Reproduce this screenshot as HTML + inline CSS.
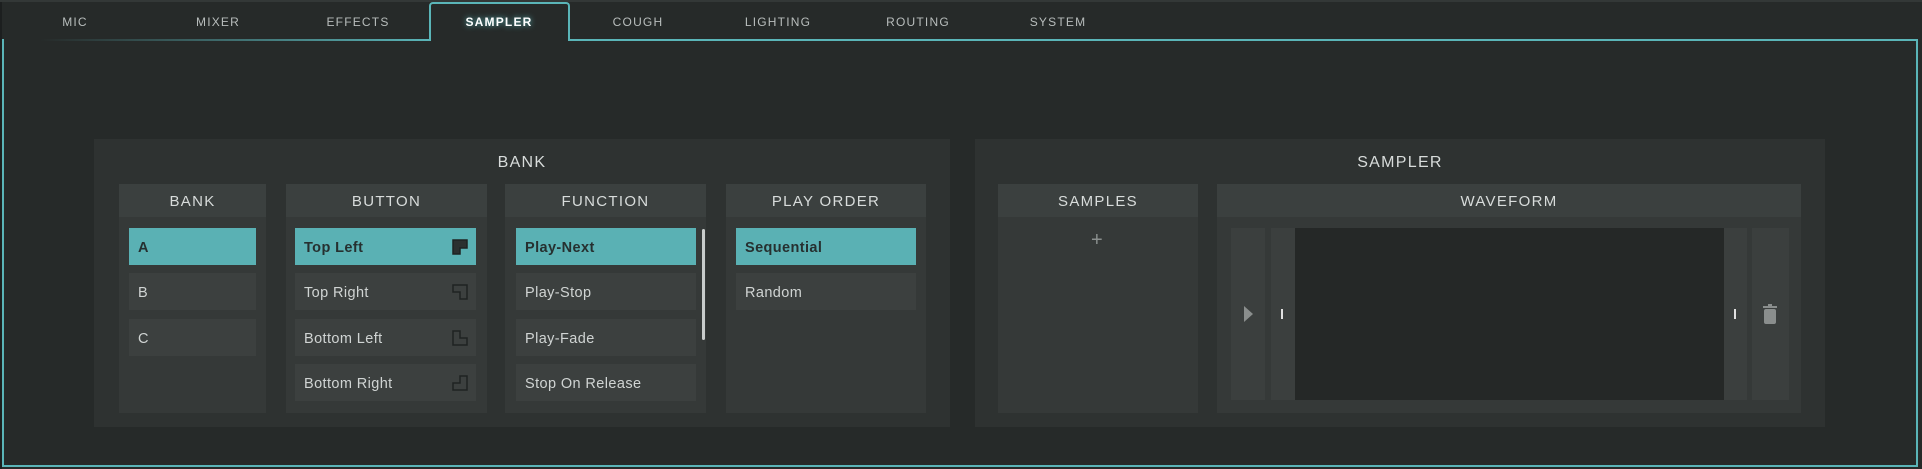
<!DOCTYPE html>
<html><head><meta charset="utf-8"><style>
*{margin:0;padding:0;box-sizing:border-box}
body{width:1922px;height:469px;background:#262a29;position:relative;overflow:hidden;font-family:"Liberation Sans",sans-serif;color:#d8dcdb}
.a{position:absolute}
.tab{position:absolute;top:15px;font-size:12px;letter-spacing:1.2px;color:#b8bdbc;transform:translateX(-50%)}
.panel{background:#2e3231}
.col{background:#353938}
.hd{background:#3b403f;height:33px;text-align:center;line-height:35px;font-size:15px;letter-spacing:1.3px;color:#d8dcdb}
.ttl{font-size:16px;letter-spacing:1.3px;text-align:center;color:#d8dcdb}
.it{position:absolute;background:#3c403f;height:37px;line-height:40px;padding-left:9px;font-size:14.5px;letter-spacing:.4px;color:#d0d4d3}
.sel{background:#5ab1b4;color:#263030;font-weight:bold}
</style></head><body>
<div class="a" style="left:0;top:0;width:1922px;height:2px;background:#333837"></div>
<div class="a" style="left:0;top:2px;width:2px;height:467px;background:#1c1f1f"></div>
<div class="a" style="left:2px;top:39px;width:1916px;height:428px;border:2px solid #5ab5b8;border-top:none"></div>
<div class="a" style="left:570px;top:39px;width:1348px;height:2px;background:#5ab5b8"></div>
<div class="a" style="left:40px;top:39px;width:390px;height:2px;background:linear-gradient(90deg,rgba(90,181,184,0),#5ab5b8)"></div>
<div class="a" style="left:429px;top:2px;width:141px;height:39px;border:2px solid #5ab5b8;border-bottom:none;border-radius:4px 4px 0 0;background:#262a29"></div>
<div class="tab" style="left:75px">MIC</div>
<div class="tab" style="left:218px">MIXER</div>
<div class="tab" style="left:358px">EFFECTS</div>
<div class="tab" style="left:499px;color:#fff;font-weight:bold;text-shadow:0 0 6px #5ab5b8">SAMPLER</div>
<div class="tab" style="left:638px">COUGH</div>
<div class="tab" style="left:778px">LIGHTING</div>
<div class="tab" style="left:918px">ROUTING</div>
<div class="tab" style="left:1058px">SYSTEM</div>

<div class="a panel" style="left:94px;top:139px;width:856px;height:288px"></div>
<div class="a ttl" style="left:94px;top:154px;width:856px">BANK</div>
<div class="a col" style="left:119px;top:184px;width:147px;height:229px"><div class="hd">BANK</div></div>
<div class="a col" style="left:286px;top:184px;width:201px;height:229px"><div class="hd">BUTTON</div></div>
<div class="a col" style="left:505px;top:184px;width:201px;height:229px"><div class="hd">FUNCTION</div></div>
<div class="a col" style="left:726px;top:184px;width:200px;height:229px"><div class="hd">PLAY ORDER</div></div>

<div class="it sel" style="left:129px;top:228px;width:127px">A</div>
<div class="it" style="left:129px;top:273px;width:127px">B</div>
<div class="it" style="left:129px;top:319px;width:127px">C</div>

<div class="it sel" style="left:295px;top:228px;width:181px">Top Left
<svg class="a" style="right:8px;top:11px" width="16" height="16"><path d="M1 1H15V9H8V15H1Z" fill="#2b3030" stroke="#1e2222" stroke-width="1.5"/></svg></div>
<div class="it" style="left:295px;top:273px;width:181px">Top Right
<svg class="a" style="right:8px;top:11px" width="16" height="16"><path d="M1 1H15V15H8V8H1Z" fill="none" stroke="#1e2222" stroke-width="1.5"/></svg></div>
<div class="it" style="left:295px;top:319px;width:181px">Bottom Left
<svg class="a" style="right:8px;top:11px" width="16" height="16"><path d="M1 1H8V8H15V15H1Z" fill="none" stroke="#1e2222" stroke-width="1.5"/></svg></div>
<div class="it" style="left:295px;top:364px;width:181px">Bottom Right
<svg class="a" style="right:8px;top:11px" width="16" height="16"><path d="M8 1H15V15H1V8H8Z" fill="none" stroke="#1e2222" stroke-width="1.5"/></svg></div>

<div class="it sel" style="left:516px;top:228px;width:180px">Play-Next</div>
<div class="it" style="left:516px;top:273px;width:180px">Play-Stop</div>
<div class="it" style="left:516px;top:319px;width:180px">Play-Fade</div>
<div class="it" style="left:516px;top:364px;width:180px">Stop On Release</div>
<div class="a" style="left:702px;top:229px;width:3px;height:111px;background:#c8cccb;border-radius:2px"></div>

<div class="it sel" style="left:736px;top:228px;width:180px">Sequential</div>
<div class="it" style="left:736px;top:273px;width:180px">Random</div>

<div class="a panel" style="left:975px;top:139px;width:850px;height:288px"></div>
<div class="a ttl" style="left:975px;top:154px;width:850px">SAMPLER</div>
<div class="a col" style="left:998px;top:184px;width:200px;height:229px"><div class="hd">SAMPLES</div></div>
<div class="a" style="left:1091px;top:229px;font-size:20px;color:#8a8f8e">+</div>
<div class="a col" style="left:1217px;top:184px;width:584px;height:229px"><div class="hd">WAVEFORM</div></div>
<div class="a" style="left:1231px;top:228px;width:34px;height:172px;background:#3b3f3e"></div>
<svg class="a" style="left:1244px;top:306px" width="10" height="16"><path d="M0 0L9 8L0 16Z" fill="#8a8e8d"/></svg>
<div class="a" style="left:1271px;top:228px;width:24px;height:172px;background:#3b3f3e"></div>
<div class="a" style="left:1281px;top:309px;width:2px;height:10px;background:#e0e0e0"></div>
<div class="a" style="left:1295px;top:228px;width:429px;height:172px;background:#252827"></div>
<div class="a" style="left:1724px;top:228px;width:23px;height:172px;background:#3b3f3e"></div>
<div class="a" style="left:1734px;top:309px;width:2px;height:10px;background:#e0e0e0"></div>
<div class="a" style="left:1752px;top:228px;width:37px;height:172px;background:#3b3f3e"></div>
<svg class="a" style="left:1763px;top:304px" width="14" height="20"><rect x="0" y="2" width="14" height="2" fill="#8a8e8d"/><rect x="5" y="0" width="4" height="2" fill="#8a8e8d"/><rect x="1" y="5" width="12" height="15" rx="2" fill="#8a8e8d"/></svg>
</body></html>
